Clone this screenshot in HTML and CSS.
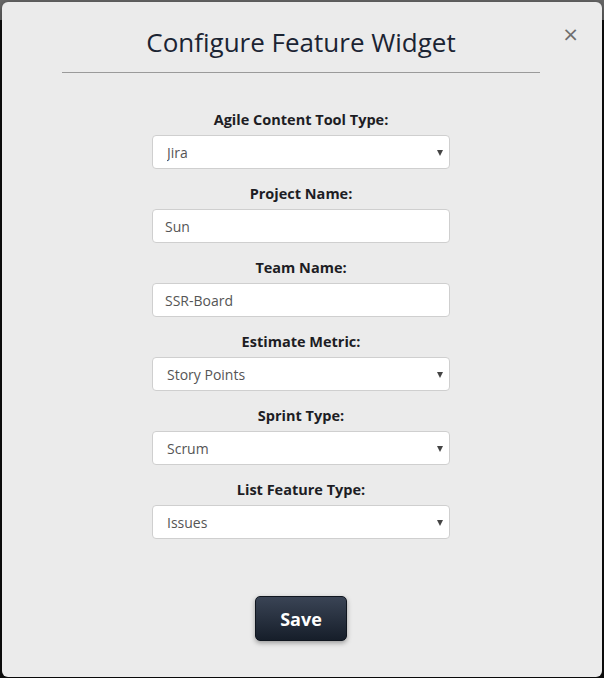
FILE: index.html
```html
<!DOCTYPE html>
<html lang="en">
<head>
<meta charset="utf-8">
<title>Configure Feature Widget</title>
<link rel="stylesheet" href="styles.css">
</head>
<body>
<div class="modal">
  <button class="close" type="button" aria-label="Close">&times;</button>
  <div class="modal-header">
    <h2 class="title">Configure Feature Widget</h2>
  </div>
  <form class="form">
    <div class="group">
      <label class="label">Agile Content Tool Type:</label>
      <div class="select-wrap"><select class="control select"><option>Jira</option></select></div>
    </div>
    <div class="group">
      <label class="label">Project Name:</label>
      <input class="control" type="text" value="Sun">
    </div>
    <div class="group">
      <label class="label">Team Name:</label>
      <input class="control" type="text" value="SSR-Board">
    </div>
    <div class="group">
      <label class="label">Estimate Metric:</label>
      <div class="select-wrap"><select class="control select"><option>Story Points</option></select></div>
    </div>
    <div class="group">
      <label class="label">Sprint Type:</label>
      <div class="select-wrap"><select class="control select"><option>Scrum</option></select></div>
    </div>
    <div class="group">
      <label class="label">List Feature Type:</label>
      <div class="select-wrap"><select class="control select"><option>Issues</option></select></div>
    </div>
    <div class="actions">
      <button class="save" type="button">Save</button>
    </div>
  </form>
</div>
</body>
</html>
```
FILE: styles.css
```css
html, body {
  margin: 0;
  padding: 0;
}
body {
  width: 604px;
  height: 678px;
  overflow: hidden;
  background: linear-gradient(#6a6a6a 0, #6a6a6a 20px, #0e0e0e 20px);
  font-family: "Open Sans", "Noto Sans", sans-serif;
}
.modal {
  position: relative;
  box-sizing: border-box;
  margin: 2px 2px 0 2px;
  width: 600px;
  height: 675px;
  background: #ebebeb;
  border-radius: 6px;
  box-shadow: 0 2px 8px rgba(0, 0, 0, 0.5);
}
.close {
  position: absolute;
  top: 20px;
  right: 23px;
  border: 0;
  background: none;
  padding: 0;
  font-family: "DejaVu Sans", sans-serif;
  font-size: 20px;
  line-height: 24px;
  color: #6e6e6e;
  cursor: pointer;
}
.modal-header {
  margin: 0 62px 0 60px;
  padding: 22px 0 12px;
  border-bottom: 1px solid #9a9a9a;
}
.title {
  margin: 0;
  text-align: center;
  font-weight: 400;
  font-size: 26px;
  line-height: 36px;
  color: #1b2433;
}
.form {
  display: flex;
  flex-direction: column;
  align-items: center;
  padding: 37px 2px 0 0;
}
.group {
  display: flex;
  flex-direction: column;
  align-items: center;
  width: 298px;
  margin-bottom: 15px;
}
.label {
  display: block;
  font-weight: 700;
  font-size: 14.5px;
  line-height: 20px;
  color: #1d1d24;
  margin-bottom: 5px;
}
.control {
  box-sizing: border-box;
  width: 298px;
  height: 34px;
  margin: 0;
  padding: 0 12px;
  border: 1px solid #cfcfcf;
  border-radius: 4px;
  background: #fff;
  font-family: inherit;
  font-size: 14px;
  color: #555;
  outline: none;
}
.select-wrap {
  position: relative;
  width: 298px;
}
.select {
  -webkit-appearance: none;
  appearance: none;
  padding-left: 14px;
}
.select-wrap::after {
  content: "";
  position: absolute;
  right: 7px;
  top: 15px;
  border-left: 3px solid transparent;
  border-right: 3px solid transparent;
  border-top: 6px solid #444;
  pointer-events: none;
}
.actions {
  margin-top: 42px;
}
.save {
  width: 92px;
  height: 45px;
  border: 1px solid #10161f;
  border-radius: 5px;
  background: linear-gradient(#3a4455, #161e2a);
  box-shadow: 0 2px 5px rgba(0, 0, 0, 0.35);
  color: #fff;
  font-family: inherit;
  font-weight: 700;
  font-size: 18px;
  cursor: pointer;
}
```
